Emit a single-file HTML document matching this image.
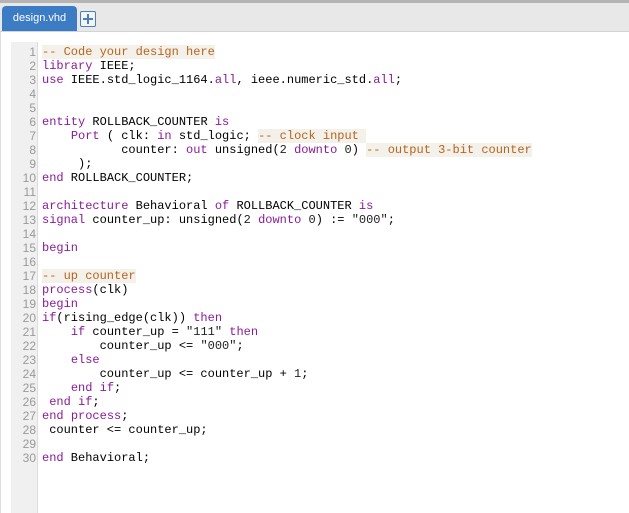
<!DOCTYPE html>
<html><head><meta charset="utf-8"><style>
html,body{margin:0;padding:0;width:629px;height:513px;overflow:hidden;background:#fff;font-family:"Liberation Sans",sans-serif}
#top{position:absolute;left:0;top:0;width:629px;height:3px;background:#b4b4b4}
#bar{position:absolute;left:0;top:3px;width:629px;height:28px;background:#e8e8e8;border-bottom:1px solid #d4d4d4}
#tab{position:absolute;left:2px;top:6px;width:75px;height:25px;background:#3b7cc4;border-radius:4px 4px 0 0;color:#fff;font-size:11px;line-height:25px;text-align:center}
#plus{position:absolute;left:80px;top:11px;width:14px;height:14px;border:1px solid #4a7fb8;border-radius:2px;background:#f4f4f4}
#plus:before{content:"";position:absolute;left:2px;top:6px;width:10px;height:2px;background:#4a7fb8}
#plus:after{content:"";position:absolute;left:6px;top:2px;width:2px;height:10px;background:#4a7fb8}
#left{position:absolute;left:0;top:32px;width:1px;height:481px;background:#ddd}
#gut{position:absolute;left:11px;top:42px;width:26px;height:471px;background:#f0f0f0;border-right:1px solid #ddd}
#nums{position:absolute;left:11px;top:45px;width:25px;text-align:right;font:12px/14px "Liberation Sans",sans-serif;color:#999}
#code{position:absolute;left:42px;top:45px;font:12px/14px "Liberation Mono",monospace;color:#000;white-space:pre}
.k{color:#8b1a9a}.c{color:#b5651d;background:#f4f0ea}.s{color:#222}
</style></head><body>
<div id="top"></div><div id="bar"></div>
<div id="tab">design.vhd</div><div id="plus"></div>
<div id="left"></div><div id="gut"></div>
<div id="nums">1<br>2<br>3<br>4<br>5<br>6<br>7<br>8<br>9<br>10<br>11<br>12<br>13<br>14<br>15<br>16<br>17<br>18<br>19<br>20<br>21<br>22<br>23<br>24<br>25<br>26<br>27<br>28<br>29<br>30</div>
<div id="code"><span class="c">-- Code your design here</span>
<span class="k">library</span> IEEE;
<span class="k">use</span> IEEE.std_logic_1164.<span class="k">all</span>, ieee.numeric_std.<span class="k">all</span>;


<span class="k">entity</span> ROLLBACK_COUNTER <span class="k">is</span>
    <span class="k">Port</span> ( clk: <span class="k">in</span> std_logic; <span class="c">-- clock input </span>
           counter: <span class="k">out</span> unsigned(<span class="s">2</span> <span class="k">downto</span> <span class="s">0</span>) <span class="c">-- output 3-bit counter</span>
     );
<span class="k">end</span> ROLLBACK_COUNTER;

<span class="k">architecture</span> Behavioral <span class="k">of</span> ROLLBACK_COUNTER <span class="k">is</span>
<span class="k">signal</span> counter_up: unsigned(<span class="s">2</span> <span class="k">downto</span> <span class="s">0</span>) := <span class="s">"000"</span>;

<span class="k">begin</span>

<span class="c">-- up counter</span>
<span class="k">process</span>(clk)
<span class="k">begin</span>
<span class="k">if</span>(rising_edge(clk)) <span class="k">then</span>
    <span class="k">if</span> counter_up = <span class="s">"111"</span> <span class="k">then</span>
        counter_up &lt;= <span class="s">"000"</span>;
    <span class="k">else</span>
        counter_up &lt;= counter_up + <span class="s">1</span>;
    <span class="k">end</span> <span class="k">if</span>;
 <span class="k">end</span> <span class="k">if</span>;
<span class="k">end</span> <span class="k">process</span>;
 counter &lt;= counter_up;

<span class="k">end</span> Behavioral;</div>
</body></html>
